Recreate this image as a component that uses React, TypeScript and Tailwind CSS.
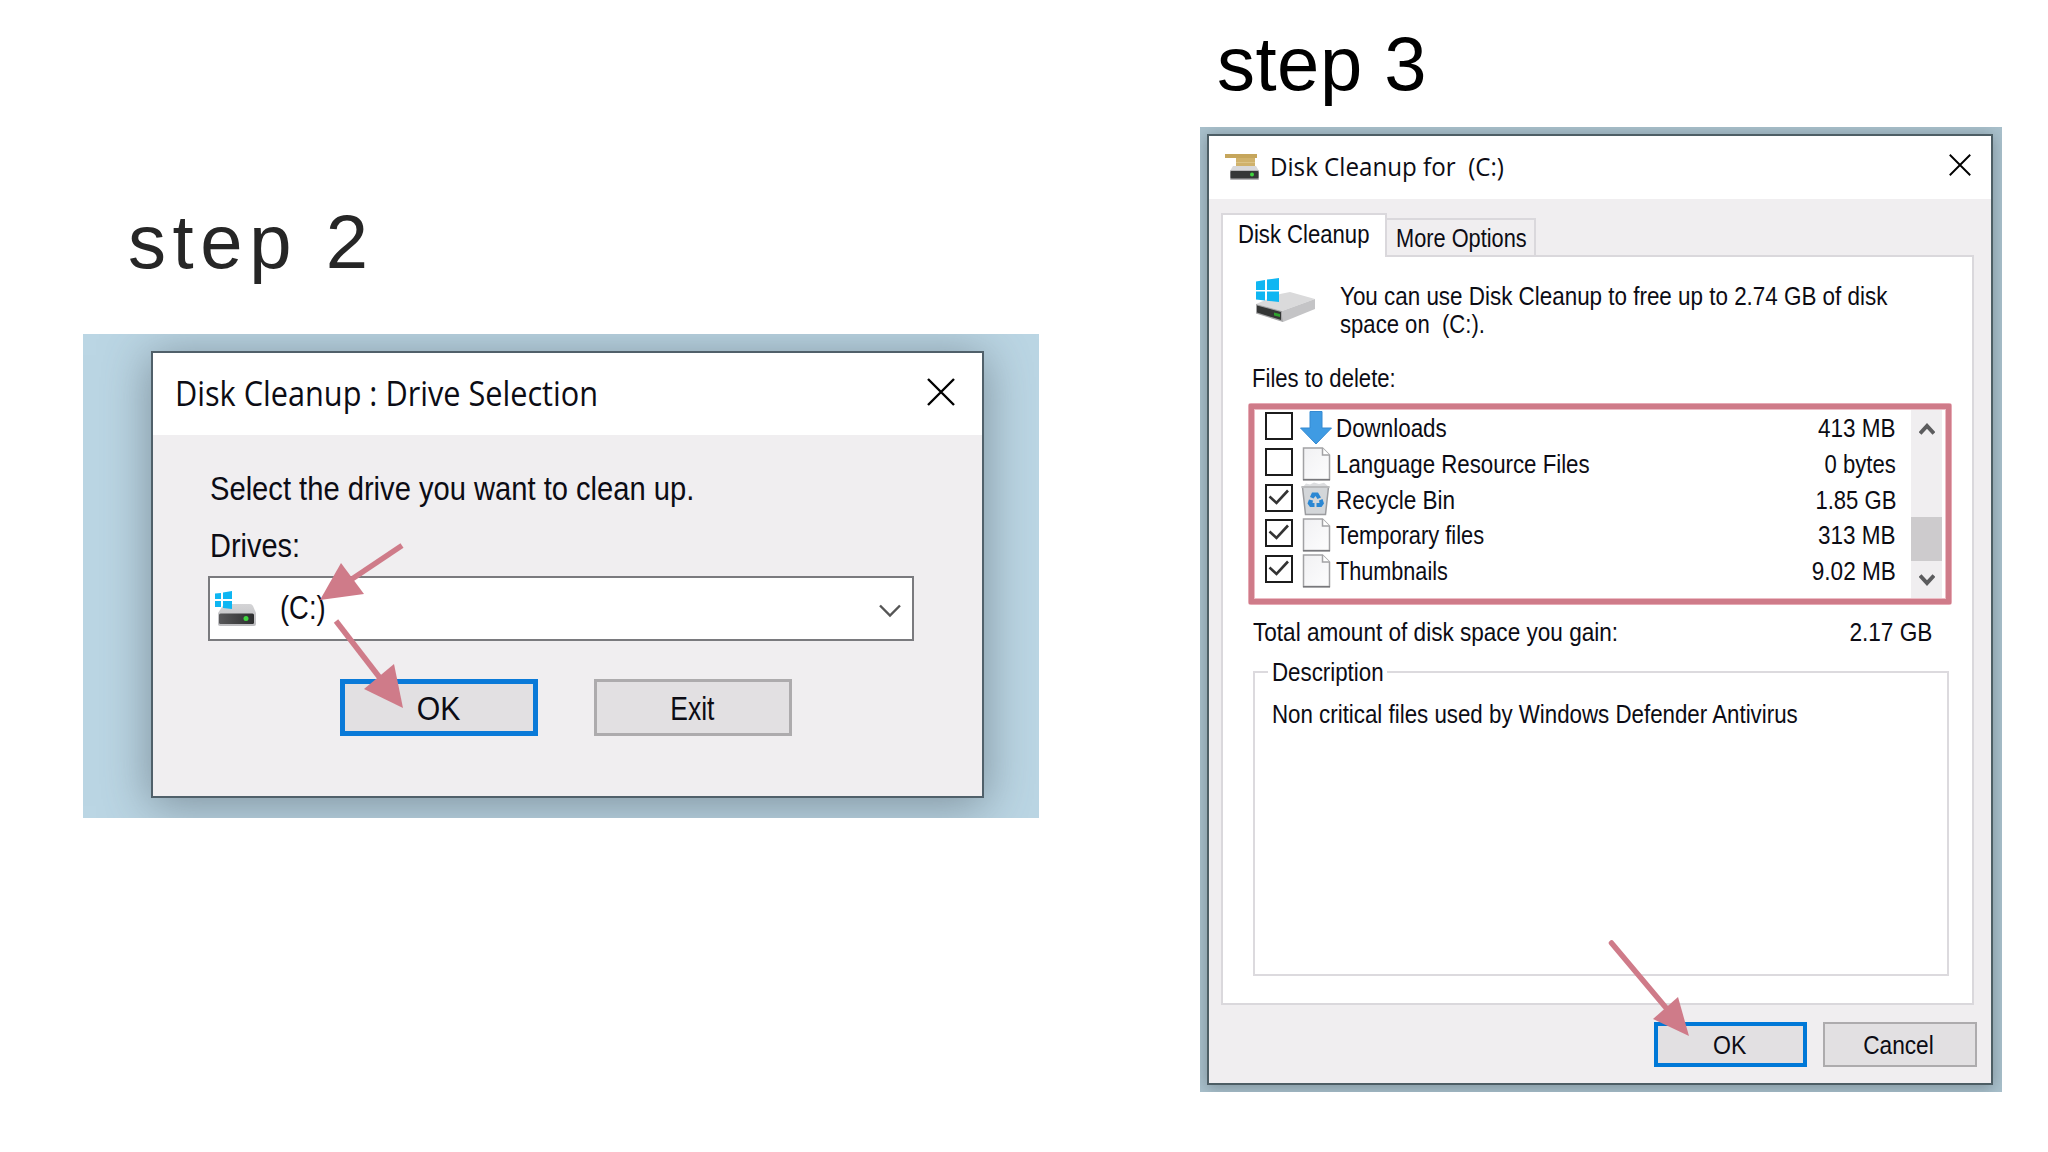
import React from 'react';
import clsx from 'clsx';

const files = [
  { name: 'Downloads', size: '413 MB', checked: false, icon: 'download', nameScale: 'scale-x-[0.861]', sizeScale: 'scale-x-[0.865]' },
  { name: 'Language Resource Files', size: '0 bytes', checked: false, icon: 'doc', nameScale: 'scale-x-[0.856]', sizeScale: 'scale-x-[0.85]' },
  { name: 'Recycle Bin', size: '1.85 GB', checked: true, icon: 'bin', nameScale: 'scale-x-[0.868]', sizeScale: 'scale-x-[0.849]' },
  { name: 'Temporary files', size: '313 MB', checked: true, icon: 'doc', nameScale: 'scale-x-[0.84]', sizeScale: 'scale-x-[0.865]' },
  { name: 'Thumbnails', size: '9.02 MB', checked: true, icon: 'doc', nameScale: 'scale-x-[0.832]', sizeScale: 'scale-x-[0.868]' },
];

const Text = ({ className, children }: { className?: string; children: React.ReactNode }) => (
  <span className={clsx('block w-fit whitespace-pre', className)}>{children}</span>
);

const CloseIcon = ({ className }: { className?: string }) => (
  <svg viewBox="0 0 28 28" className={className} fill="none" stroke="#000" strokeWidth="2.4">
    <path d="M1 1L27 27M27 1L1 27" />
  </svg>
);

const SmallDriveIcon = () => (
  <svg className="shrink-0" width="42" height="36" viewBox="0 0 42 36">
    <defs>
      <linearGradient id="smallTop" x1="0" y1="0" x2="0" y2="1">
        <stop offset="0" stopColor="#d4d4d6" />
        <stop offset="1" stopColor="#bdbdc0" />
      </linearGradient>
      <linearGradient id="smallFront" x1="0" y1="0" x2="1" y2="0">
        <stop offset="0" stopColor="#58585a" />
        <stop offset="1" stopColor="#2e2f30" />
      </linearGradient>
    </defs>
    <path d="M9 13H35Q37 13 38 15L41 22V33Q41 35 39 35H5Q3 35 3 33V22Z" fill="url(#smallTop)" />
    <rect x="4" y="22.500" width="35" height="10.500" rx="1.500" fill="url(#smallFront)" />
    <circle cx="31" cy="27.500" r="2.500" fill="#3fd63f" />
    <path d="M0 2.500L6 2V8H0ZM8 1.500L17 0V8H8ZM0 10H6V16H0ZM8 10H17V18L8 17Z" fill="#0fb6f2" />
  </svg>
);

const DriveIcon = () => (
  <svg className="shrink-0" width="60" height="45" viewBox="0 0 60 45">
    <path d="M0 26L24 16L34 14L59 21L26 33Z" fill="#dadadb" />
    <path d="M26 33L59 21V31L27 44Z" fill="#c4c4c6" />
    <path d="M0 26L26 33L27 44L0 35.500Z" fill="#a3a3a5" />
    <path d="M1 27.500L25 34V42L1 34.500Z" fill="#343635" />
    <path d="M18 34.500L24 36V39L18 37.500Z" fill="#2fa32f" />
    <path d="M0 3.500L9 2V12H0ZM11 1.500L23 0V12H11ZM0 13.500H9V22.500L0 21.500ZM11 13.500H23V24L11 22.800Z" fill="#0fb6f2" />
  </svg>
);

const CleanupIcon = () => (
  <svg width="35" height="27" viewBox="0 0 35 27">
    <path d="M8 12H31L34 17H5Z" fill="#d9d9db" />
    <rect x="5" y="16" width="29" height="10" rx="1" fill="#b5b5b8" />
    <rect x="5.500" y="17" width="28" height="7.500" rx="1" fill="#353738" />
    <circle cx="27" cy="20.500" r="2" fill="#3fd63f" />
    <rect x="11" y="3" width="19" height="9" fill="#d0b26c" />
    <rect x="0" y="0" width="32" height="4" fill="#c6a65c" />
    <path d="M11 8.500H30" stroke="#dcc488" />
  </svg>
);

const FileIcon = ({ kind }: { kind: string }) => {
  if (kind === 'download') {
    return (
      <svg width="32" height="34" viewBox="0 0 32 34">
        <path d="M10 0.500H22V17H31.500L16 33L0.500 17H10Z" fill="#3f9be3" stroke="#348ad2" />
      </svg>
    );
  }
  if (kind === 'bin') {
    return (
      <svg width="32" height="34" viewBox="0 0 32 34">
        <path d="M3 5L6 1.500L10 2.500L14 0.500L19 2L24 0.800L29 5Z" fill="#dcdddf" />
        <path d="M2.500 5H28.500L25.500 32.500H5.500Z" fill="#d3d6d9" stroke="#9b9c9f" strokeWidth="1.500" />
        <path d="M1.500 4H29.500V6H1.500Z" fill="#b9babc" />
        <path d="M12 10.500H18L21 15.500L17.500 17L15.500 14L13.500 16.500L10 15Z" fill="#2b87d3" />
        <path d="M9 17.500L13 18.500L12.500 21H14.500V25H10L7.500 21.500Z" fill="#2b87d3" />
        <path d="M19 18.500L22.500 17L24 21.500L21.500 25H16.500V21H19.500Z" fill="#2b87d3" />
      </svg>
    );
  }
  return (
    <svg width="32" height="34" viewBox="0 0 32 34">
      <defs>
        <linearGradient id="page" x1="0" y1="0" x2="1" y2="1">
          <stop offset="0" stopColor="#f1f1f3" />
          <stop offset="1" stopColor="#fdfdfe" />
        </linearGradient>
      </defs>
      <path d="M3.500 1H22.500L29.500 8V32.500H3.500Z" fill="url(#page)" stroke="#a2a2a5" strokeWidth="1.500" />
      <path d="M3 32.800H30" stroke="#77777a" strokeWidth="1.500" />
      <path d="M22.500 1V8H29.500" fill="#fff" stroke="#a2a2a5" strokeWidth="1.500" />
    </svg>
  );
};

const Checkbox = ({ checked }: { checked: boolean }) => (
  <div className="-mt-[3px] h-7 w-7 shrink-0 border-2 border-[#1c1c1c] bg-white">
    {checked && (
      <svg width="24" height="24" viewBox="0 0 24 24" fill="none" stroke="#333" strokeWidth="2.600">
        <path d="M2.500 10.500L9.500 17L21 4.500" />
      </svg>
    )}
  </div>
);

const DriveSelection = () => (
  <section className="ml-[83px] w-[956px] pt-[202px]">
    <h2 className="ml-[45px] h-20 whitespace-nowrap text-[76px] leading-[80px] tracking-[6.6px] text-[#262626]">step 2</h2>
    <div className="relative mt-[52px] h-[484px] overflow-hidden bg-[#bbd6e4] pl-[68px] pt-[17px]">
      <div className="h-[447px] w-[833px] border-2 border-[#50606a] bg-[#f0eef0] text-[34px] leading-9 shadow-[0_6px_44px_2px_rgba(70,80,90,0.5)]">
        <header className="flex h-[82px] justify-between bg-white pl-[22px] pr-[27px]">
          <Text className="mt-[22px] origin-left scale-x-[0.902] font-['Open_Sans',sans-serif]">Disk Cleanup : Drive Selection</Text>
          <CloseIcon className="mt-[25px] h-7 w-7" />
        </header>
        <div className="px-[55px] pt-[35px]">
          <Text className="ml-[2px] origin-left scale-x-[0.857]">Select the drive you want to clean up.</Text>
          <Text className="ml-[2px] mt-[21px] origin-left scale-x-[0.852]">Drives:</Text>
          <div className="mt-[13px] flex h-[65px] w-[706px] items-center border-2 border-[#7a7a7e] bg-white pl-[5px] pr-[11px]">
            <SmallDriveIcon />
            <Text className="-mt-[4px] ml-[23px] origin-left scale-x-[0.805]">(C:)</Text>
            <svg className="ml-auto mt-1" width="22" height="14" viewBox="0 0 22 14" fill="none" stroke="#555" strokeWidth="2.400">
              <path d="M1 1.500L11 11.500L21 1.500" />
            </svg>
          </div>
          <div className="mt-[38px] flex gap-14 pl-[132px]">
            <button className="flex h-[57px] w-[198px] items-center justify-center border-[5px] border-[#0a7ad8] bg-[#e2e0e2]">
              <Text className="scale-x-[0.888]">OK</Text>
            </button>
            <button className="flex h-[57px] w-[198px] items-center justify-center border-[3px] border-[#adabad] bg-[#e2e0e2] pr-px">
              <Text className="scale-x-[0.779]">Exit</Text>
            </button>
          </div>
        </div>
      </div>
      {/* pointer arrows */}
      <svg className="absolute left-0 top-0" width="956" height="484" viewBox="83 334 956 484" fill="#cf7b89" stroke="#cf7b89">
        <path d="M402 545.500L352 579" strokeWidth="5.500" />
        <path d="M320 600L341 563L364 594Z" stroke="none" />
        <path d="M336 621L380 678" strokeWidth="5.500" />
        <path d="M403 708L394 664L364 689Z" stroke="none" />
      </svg>
    </div>
  </section>
);

const CleanupDialog = () => (
  <section className="ml-[161px] w-[802px] pt-6">
    <h2 className="ml-[17px] h-20 whitespace-nowrap text-[76px] leading-[80px] tracking-[0.5px] text-black">step 3</h2>
    <div className="relative mt-[23px] h-[965px] overflow-hidden bg-[#a9c1cc] pl-[7px] pt-[7px]">
      <div className="h-[951px] w-[786px] border-2 border-[#4d5e65] bg-[#f0eef0] text-[26px] leading-7 shadow-[0_2px_14px_rgba(70,80,90,0.45)]">
        <header className="flex h-[63px] bg-white pl-4 pr-5">
          <div className="mt-[18px]">
            <CleanupIcon />
          </div>
          <Text className="ml-[10px] mt-4 origin-left scale-x-[0.929] font-['Open_Sans',sans-serif]">{'Disk Cleanup for  (C:)'}</Text>
          <CloseIcon className="ml-auto mt-[18px] h-[22px] w-[22px]" />
        </header>

        <div className="pl-3 pt-[14px]">
          <div className="flex h-[42px] items-end">
            <div className="relative -mb-[2px] h-11 w-[166px] border-2 border-b-0 border-[#dad8dc] bg-white pl-[15px] pt-[5px]">
              <Text className="origin-left scale-x-[0.85]">Disk Cleanup</Text>
            </div>
            <div className="h-[37px] w-[149px] border-r-2 border-t-2 border-[#dad8dc] pl-[9px] pt-1">
              <Text className="origin-left scale-x-[0.837]">More Options</Text>
            </div>
          </div>

          <div className="h-[750px] w-[753px] border-2 border-[#dad8dc] bg-white pt-[21px]">
            <div className="flex h-[59px] pl-[33px]">
              <DriveIcon />
              <div className="ml-6 mt-1">
                <Text className="origin-left scale-x-[0.862]">You can use Disk Cleanup to free up to 2.74 GB of disk</Text>
                <Text className="origin-left scale-x-[0.85]">{'space on  (C:).'}</Text>
              </div>
            </div>
            <Text className="ml-[29px] mt-[27px] origin-left scale-x-[0.85]">Files to delete:</Text>

            <div className="ml-[25px] mt-[11px] h-[202px] w-[704px] rounded-[3px] bg-[#e6a9b4] p-px">
              <div className="h-full border-[5px] border-[#cf7b89]">
                <div className="flex h-full border border-[#ecbcc5] bg-white pr-[3px]">
                  <div className="flex-1 pl-[10px] pr-[15px]">
                    {files.map((file) => (
                      <div key={file.name} className="flex h-[35.7px] items-center">
                        <Checkbox checked={file.checked} />
                        <div className="ml-[7px] mr-1 h-[34px] w-8 shrink-0">
                          <FileIcon kind={file.icon} />
                        </div>
                        <Text className={clsx('mt-px origin-left', file.nameScale)}>{file.name}</Text>
                        <Text className={clsx('ml-auto mt-px origin-right', file.sizeScale)}>{file.size}</Text>
                      </div>
                    ))}
                  </div>
                  <div className="flex w-[31px] flex-col items-center bg-[#f0eef0] pb-3 pt-[13px]">
                    <svg width="16" height="12" viewBox="0 0 16 12" fill="none" stroke="#5c5c5e" strokeWidth="4">
                      <path d="M1 10.500L8 3L15 10.500" />
                    </svg>
                    <div className="mt-[82px] h-11 w-full bg-[#cdcbcd]" />
                    <svg className="mt-auto" width="16" height="12" viewBox="0 0 16 12" fill="none" stroke="#5c5c5e" strokeWidth="4">
                      <path d="M1 1.500L8 9L15 1.500" />
                    </svg>
                  </div>
                </div>
              </div>
            </div>

            <div className="mt-[13px] flex justify-between pl-[30px] pr-10">
              <Text className="origin-left scale-x-[0.868]">Total amount of disk space you gain:</Text>
              <Text className="origin-right scale-x-[0.87]">2.17 GB</Text>
            </div>

            <div className="ml-[30px] mt-[25px] h-[305px] w-[696px] border-2 border-[#dcdade]">
              <div className="-mt-[15px] ml-[13px] w-[119px] bg-white pl-[4px]">
                <Text className="origin-left scale-x-[0.858]">Description</Text>
              </div>
              <Text className="ml-[17px] mt-[14px] origin-left scale-x-[0.858]">Non critical files used by Windows Defender Antivirus</Text>
            </div>
          </div>

          <div className="mt-[17px] flex justify-end gap-4 pr-[14px]">
            <button className="flex h-[45px] w-[153px] items-center justify-center border-4 border-[#0078d7] bg-[#e2e0e2] pr-[2px]">
              <Text className="scale-x-[0.887]">OK</Text>
            </button>
            <button className="flex h-[45px] w-[154px] items-center justify-center border-2 border-[#adabad] bg-[#e2e0e2] pr-[3px]">
              <Text className="scale-x-[0.872]">Cancel</Text>
            </button>
          </div>
        </div>
      </div>
      <svg className="absolute left-0 top-0" width="802" height="965" viewBox="1200 127 802 965" fill="#cf7b89" stroke="#cf7b89">
        <path d="M1611.500 943L1667 1009" strokeWidth="5.500" strokeLinecap="round" />
        <path d="M1689 1036L1678 997L1653 1019Z" stroke="none" />
      </svg>
    </div>
  </section>
);

export default function App() {
  return (
    <main className="flex h-[1152px] w-[2048px] overflow-hidden bg-white font-['Liberation_Sans',Arial,sans-serif] text-[#0c0c14]">
      <DriveSelection />
      <CleanupDialog />
    </main>
  );
}
